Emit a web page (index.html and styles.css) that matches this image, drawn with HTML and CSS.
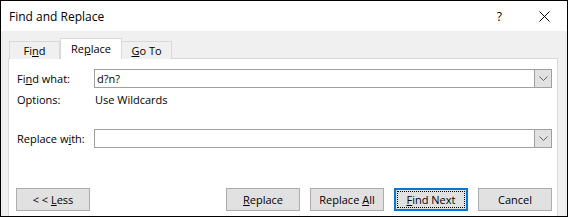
FILE: index.html
```html
<!DOCTYPE html>
<html lang="en">
<head>
    <meta charset="UTF-8">
    <title>Find and Replace</title>
    <link rel="stylesheet" href="styles.css">
</head>
<body>
    <div class="dialog">
        <div class="titlebar">
            <span class="title">Find and Replace</span>
            <span class="help">?</span>
            <svg class="close" width="11" height="11" viewBox="0 0 11 11">
                <path d="M0.5 0.5 L10.5 10.5 M10.5 0.5 L0.5 10.5" stroke="#000" stroke-width="1" fill="none"/>
            </svg>
        </div>

        <div class="body">
            <div class="tabs">
                <div class="tab">Fi<u>n</u>d</div>
                <div class="tab active">Re<u>p</u>lace</div>
                <div class="tab"><u>G</u>o To</div>
            </div>

            <div class="panel">
                <div class="row">
                    <label class="label">Fi<u>n</u>d what:</label>
                    <div class="combo">
                        <span class="value">d?n?</span>
                        <span class="drop">
                            <svg width="9" height="5" viewBox="0 0 9 5"><path d="M0.5 0.5 L4.5 4.5 L8.5 0.5" stroke="#606060" fill="none"/></svg>
                        </span>
                    </div>
                </div>
                <div class="row options">
                    <span class="label">Options:</span>
                    <span class="opt-value">Use Wildcards</span>
                </div>
                <div class="row replace">
                    <label class="label">Replace w<u>i</u>th:</label>
                    <div class="combo">
                        <span class="value"></span>
                        <span class="drop">
                            <svg width="9" height="5" viewBox="0 0 9 5"><path d="M0.5 0.5 L4.5 4.5 L8.5 0.5" stroke="#606060" fill="none"/></svg>
                        </span>
                    </div>
                </div>

                <div class="buttons">
                    <button class="btn">&lt; &lt; <u>L</u>ess</button>
                    <div class="spacer"></div>
                    <button class="btn"><u>R</u>eplace</button>
                    <button class="btn">Replace <u>A</u>ll</button>
                    <button class="btn default"><span class="focus"><u>F</u>ind Next</span></button>
                    <button class="btn">Cancel</button>
                </div>
            </div>
        </div>
    </div>
</body>
</html>
```

FILE: styles.css
```css
body {
    margin: 0;
    font-family: "Open Sans", "Noto Sans", sans-serif;
    font-size: 11px;
    color: #000;
}

.dialog {
    width: 566px;
    height: 215px;
    border: 1px solid #000;
    background: #f0f0f0;
    overflow: hidden;
}

.titlebar {
    height: 30px;
    background: #fff;
    display: flex;
    align-items: center;
    padding-left: 8px;
}
.title {
    font-size: 12px;
    flex: 1;
}
.help {
    font-size: 12px;
    margin-right: 37px;
}
.close {
    margin-right: 17px;
}

.body {
    padding: 7px 9px 0 7px;
}

.tabs {
    display: flex;
    align-items: flex-end;
    height: 21px;
    padding-left: 1px;
    position: relative;
    z-index: 1;
}
.tab {
    height: 17px;
    line-height: 17px;
    padding: 0 0;
    width: 49px;
    text-align: center;
    border: 1px solid #d9d9d9;
    border-bottom: none;
    background: #f0f0f0;
}
.tab + .tab {
    border-left: none;
}
.tab.active {
    width: 60px;
    height: 20px;
    line-height: 19px;
    background: #fff;
    border-left: 1px solid #d9d9d9;
    border-right: 1px solid #d9d9d9;
}
.tab.active + .tab {
    border-left: none;
}

.panel {
    background: #fff;
    border: 1px solid #d9d9d9;
    margin-top: -1px;
    height: 170px;
    padding: 10px 5px 0 7px;
}

.row {
    display: flex;
    align-items: center;
}
.label {
    width: 77px;
    padding-left: 1px;
}
.combo {
    flex: 1;
    height: 17px;
    border: 1px solid #a0a0a0;
    display: flex;
    align-items: center;
}
.value {
    flex: 1;
    padding-left: 2px;
}
.drop {
    width: 16px;
    height: 17px;
    background: #e1e1e1;
    border-left: 1px solid #a0a0a0;
    display: flex;
    align-items: center;
    justify-content: center;
}

.options {
    height: 16px;
    margin-top: 3px;
}
.opt-value {
    padding-left: 1px;
}
.replace {
    margin-top: 22px;
}

.buttons {
    display: flex;
    margin-top: 40px;
    gap: 10px;
}
.spacer {
    flex: 1;
}
.btn {
    width: 74px;
    height: 23px;
    background: #e1e1e1;
    border: 1px solid #adadad;
    font-family: inherit;
    font-size: 11px;
    color: #000;
    padding: 0;
}
.btn.default {
    border: 2px solid #0078d7;
    padding: 1px;
}
.focus {
    display: block;
    height: 15px;
    line-height: 15px;
    border: 1px dotted #000;
}
```
